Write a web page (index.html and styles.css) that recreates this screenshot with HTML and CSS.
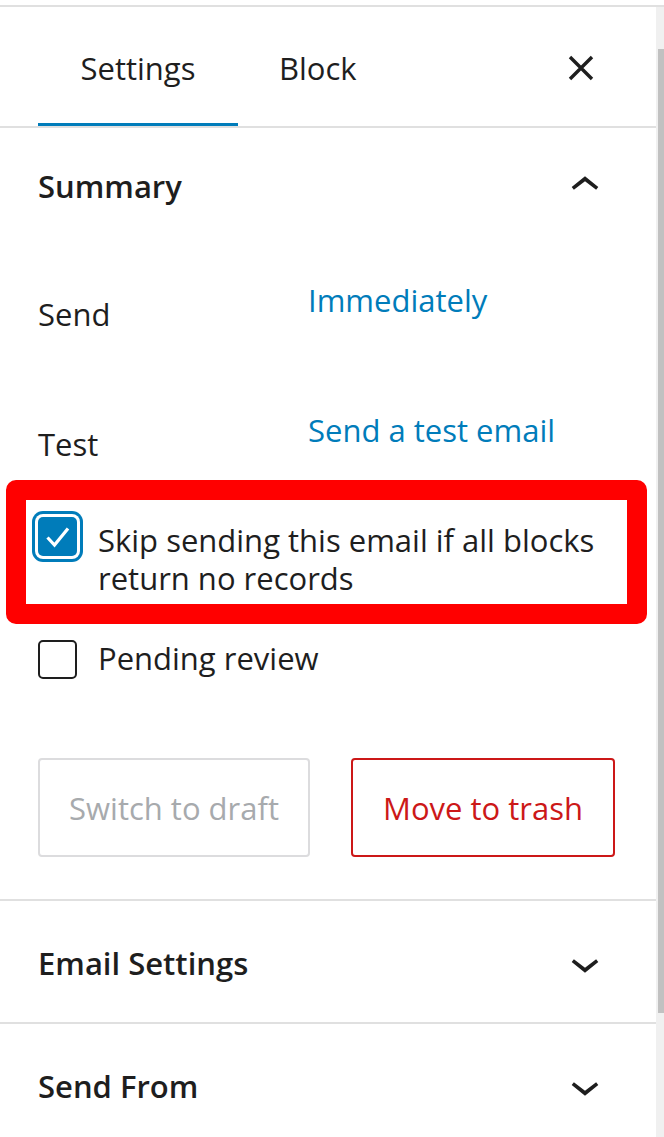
FILE: index.html
```html
<!DOCTYPE html>
<html lang="en">
<head>
<meta charset="utf-8">
<title>Settings sidebar</title>
<link rel="stylesheet" href="styles.css">
</head>
<body>
<div class="app">
  <div class="topline"></div>
  <div class="main">
    <div class="panel">
      <div class="tabs">
        <div class="tab active">Settings</div>
        <div class="tab">Block</div>
        <div class="close">
          <svg viewBox="0 0 26 26" width="26" height="26"><path d="M2 2 L24 24 M24 2 L2 24" stroke="#1e1e1e" stroke-width="3.4" fill="none"/></svg>
        </div>
      </div>

      <section class="section summary">
        <div class="sec-head">
          <span class="sec-title">Summary</span>
          <svg class="chev" viewBox="0 0 24 24" width="58" height="58"><path d="M6.5 12.4L12 8l5.5 4.4-.9 1.2L12 10l-4.6 3.6-.9-1.2z" fill="#1e1e1e"/></svg>
        </div>
        <div class="row first">
          <span class="row-label">Send</span>
          <span class="row-value">Immediately</span>
        </div>
        <div class="row">
          <span class="row-label">Test</span>
          <span class="row-value">Send a test email</span>
        </div>
        <div class="highlight">
          <div class="check-row">
            <span class="checkbox checked">
              <svg viewBox="0 0 39 39" width="39" height="39"><path d="M9.5 20.5 L16.5 28 L30 11.5" stroke="#fff" stroke-width="3.2" fill="none"/></svg>
            </span>
            <span class="check-label">Skip sending this email if all blocks return no records</span>
          </div>
        </div>
        <div class="check-row pending">
          <span class="checkbox"></span>
          <span class="check-label">Pending review</span>
        </div>
        <div class="actions">
          <button class="btn draft" type="button">Switch to draft</button>
          <button class="btn trash" type="button">Move to trash</button>
        </div>
      </section>

      <section class="section collapsed">
        <div class="sec-head">
          <span class="sec-title">Email Settings</span>
          <svg class="chev" viewBox="0 0 24 24" width="58" height="58"><path d="M17.5 11.6L12 16l-5.5-4.4.9-1.2L12 14l4.6-3.6.9 1.2z" fill="#1e1e1e"/></svg>
        </div>
      </section>

      <section class="section collapsed last">
        <div class="sec-head">
          <span class="sec-title">Send From</span>
          <svg class="chev" viewBox="0 0 24 24" width="58" height="58"><path d="M17.5 11.6L12 16l-5.5-4.4.9-1.2L12 14l4.6-3.6.9 1.2z" fill="#1e1e1e"/></svg>
        </div>
      </section>
    </div>
    <div class="scrollbar"><div class="thumb"></div></div>
  </div>
</div>
</body>
</html>
```

FILE: styles.css
```css
html, body {
  margin: 0;
  padding: 0;
  background: #fff;
}
body {
  font-family: "Open Sans", "Noto Sans", sans-serif;
  font-size: 31px;
  line-height: 38px;
  color: #1e1e1e;
  height: 1137px;
  overflow: hidden;
}
.app {
  display: flex;
  flex-direction: column;
  height: 1137px;
}
.topline {
  margin-top: 5px;
  height: 2px;
  background: #e0e0e0;
  flex: none;
}
.main {
  display: flex;
  flex: 1;
  min-height: 0;
}
.panel {
  flex: 1;
  min-width: 0;
}
.scrollbar {
  width: 8px;
  background: #f0f0f0;
  display: flex;
  justify-content: flex-end;
  align-items: flex-start;
}
.thumb {
  width: 6px;
  height: 964px;
  margin-top: 42px;
  background: #c1c1c1;
}

/* tabs */
.tabs {
  display: flex;
  align-items: stretch;
  height: 119px;
  padding-left: 38px;
  border-bottom: 2px solid #e0e0e0;
}
.tab {
  padding: 42px 41px 0;
  font-weight: 500;
  box-sizing: border-box;
}
.tab.active {
  box-shadow: inset 0 -3px 0 #007cba;
  width: 200px;
  text-align: center;
  padding-left: 0;
  padding-right: 0;
}
.close {
  margin-left: auto;
  margin-right: 62px;
  padding-top: 43px;
}

/* sections */
.section {
  border-bottom: 2px solid #e0e0e0;
}
.section.last {
  border-bottom: none;
}
.summary {
  padding-bottom: 42px;
}
.sec-head {
  display: flex;
  align-items: center;
  justify-content: space-between;
  padding: 39px 57px 0 38px;
}
.collapsed .sec-head {
  padding-top: 43px;
  padding-bottom: 40px;
}
.sec-title {
  font-weight: 600;
}
.chev {
  margin: -10px -15px -10px 0;
  flex: none;
}

.row {
  display: flex;
  align-items: flex-start;
  padding-left: 38px;
  margin-top: 78px;
}
.row.first {
  margin-top: 76px;
}
.row-label {
  width: 270px;
  padding-top: 14px;
}
.row-value {
  color: #007cba;
}

.highlight {
  margin: 17px 9px 0 6px;
  border: 20px solid #ff0000;
  border-radius: 10px;
  padding: 21px 20px 7px 12px;
}
.check-row {
  display: flex;
  align-items: flex-start;
  gap: 21px;
}
.checkbox {
  flex: none;
  width: 39px;
  height: 39px;
  box-sizing: border-box;
  border: 2px solid #1e1e1e;
  border-radius: 5px;
  background: #fff;
  margin-top: 1px;
}
.checkbox.checked {
  border: none;
  background: #007cba;
  margin-top: -4px;
  box-shadow: 0 0 0 3px #fff, 0 0 0 6px #007cba;
}
.checkbox svg {
  display: block;
}
.pending {
  padding-left: 38px;
  margin-top: 15px;
}

.actions {
  display: flex;
  gap: 41px;
  padding-left: 38px;
  margin-top: 79px;
}
.btn {
  font: inherit;
  height: 99px;
  box-sizing: border-box;
  border-radius: 4px;
  background: #fff;
  padding: 0;
}
.btn.draft {
  width: 272px;
  border: 2px solid #dcdcde;
  color: #a7aaad;
}
.btn.trash {
  width: 264px;
  border: 2px solid #cc1818;
  color: #cc1818;
}
```
